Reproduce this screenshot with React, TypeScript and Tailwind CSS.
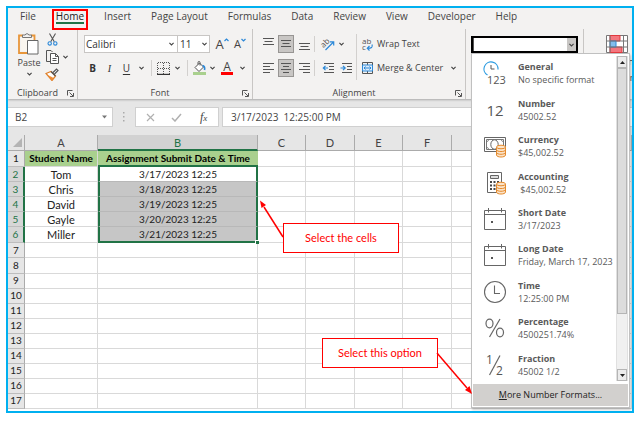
import type { ReactNode } from "react";

const tabs = ["File", "Home", "Insert", "Page Layout", "Formulas", "Data", "Review", "View", "Developer", "Help"];

const columns = [
  { name: "A", width: "w-[73px]" },
  { name: "B", width: "w-[160px]" },
  { name: "C", width: "w-[48px]" },
  { name: "D", width: "w-[49px]" },
  { name: "E", width: "w-[48px]" },
  { name: "F", width: "w-[49px]" },
  { name: "G", width: "w-[48px]" },
  { name: "H", width: "w-[49px]" },
  { name: "I", width: "w-[48px]" },
  { name: "J", width: "" },
];

const students = [
  ["Tom", "3/17/2023 12:25"],
  ["Chris", "3/18/2023 12:25"],
  ["David", "3/19/2023 12:25"],
  ["Gayle", "3/20/2023 12:25"],
  ["Miller", "3/21/2023 12:25"],
];

function Chevron({ className = "w-3" }: { className?: string }) {
  return (
    <span className={`flex shrink-0 justify-center ${className}`}>
      <svg width="5" height="4" viewBox="0 0 5 4" fill="none" stroke="#444" strokeWidth="1.1">
        <path d="M.4.8 2.5 2.9 4.6.8" />
      </svg>
    </span>
  );
}

function Lines({ rows, height = 12 }: { rows: [number, number, number][]; height?: number }) {
  return (
    <svg width="12" height={height} viewBox={`0 0 12 ${height}`} stroke="#555" strokeWidth="1">
      {rows.map(([a, b, y]) => (
        <path key={y} d={`M${a} ${y}H${b}`} />
      ))}
    </svg>
  );
}

function Tool({ label, className, children }: { label: string; className: string; children: ReactNode }) {
  return (
    <button aria-label={label} className={`flex shrink-0 items-center justify-center ${className}`}>
      {children}
    </button>
  );
}

function Group({ name, launcher = true, className, children }: { name: string; launcher?: boolean; className: string; children?: ReactNode }) {
  return (
    <section className={`flex shrink-0 flex-col pt-[3px] ${className}`}>
      <div className="h-[55px]">{children}</div>
      <div className="flex h-3 items-center">
        <h2 className="flex-1 text-center text-[9px] leading-3 text-[#444]">{name}</h2>
        {launcher && (
          <button aria-label={`${name} settings`} className="mr-[3px]">
            <svg width="7" height="7" viewBox="0 0 7 7" fill="none" stroke="#555" strokeWidth="1">
              <path d="M.5 5.5v-5h5M2.5 2.5l3.5 3.5M6.5 3v3.5H3" />
            </svg>
          </button>
        )}
      </div>
    </section>
  );
}

function Divider({ className }: { className: string }) {
  return <span className={`w-px shrink-0 bg-[#d2d0ce] ${className}`} />;
}

function ClipboardGroup() {
  return (
    <Group name="Clipboard" className="w-[70px] border-r border-[#c8c6c4]">
      <div className="flex">
        <button className="ml-1.5 flex w-[30px] flex-col items-center text-[9px] leading-3 text-[#444]">
          <svg width="24" height="25" viewBox="0 0 24 25" fill="none">
            <path d="M6 3.500H2V21h8.500M17.500 8V3.500H14" stroke="#e8963a" strokeWidth="1.800" />
            <path d="M4 5h12v4h-5v10H4z" fill="#faf6ef" />
            <path d="M5.500 5.500V3h2.700a1.900 1.900 0 0 1 3.600 0h2.700v2.500z" fill="#f3f2f1" stroke="#777" />
            <path d="M10.500 8.500h10.500v13.500H10.500z" fill="#fff" stroke="#666" />
          </svg>
          <span>Paste</span>
          <Chevron className="mt-[3px] w-3" />
        </button>
        <div className="ml-px flex flex-col items-start">
          <Tool label="Cut" className="h-[15px] w-[14px]">
            <svg width="11" height="13" viewBox="0 0 11 13" fill="none">
              <path d="M2.500.5 7.300 8.700M8.500.5 3.700 8.700" stroke="#555" strokeWidth="1.100" />
              <circle cx="2.700" cy="10.400" r="1.700" stroke="#2b88d8" strokeWidth="1.100" />
              <circle cx="8.300" cy="10.400" r="1.700" stroke="#2b88d8" strokeWidth="1.100" />
            </svg>
          </Tool>
          <span className="mt-0.5 flex items-center">
            <Tool label="Copy" className="h-[15px] w-[14px]">
              <svg width="13" height="14" viewBox="0 0 13 14" fill="none" stroke="#555">
                <path d="M4.500 11.500h-4V.5h4.500l1.500 1.500" />
                <path d="M4.500 3.500h5L12.500 6.500v7h-8zM9.500 3.500v3h3M6.500 8.500h4M6.500 10.500h4" fill="#fff" />
              </svg>
            </Tool>
            <Chevron />
          </span>
          <Tool label="Format Painter" className="mt-0.5 h-4 w-[14px]">
            <svg width="14" height="13" viewBox="0 0 14 13" fill="none">
              <path d="M1 5.500 6 3.500l4.500 4.500L7 12.500z" fill="#fff" stroke="#e0812b" strokeWidth="1.300" />
              <path d="M3 7 8.500 10 7 12.500z" fill="#f08c32" />
              <path d="M6 3.500 10.500 8M8 4.500l3.500-3.500 1.500 1.500-3.500 3.500" stroke="#555" strokeWidth="1.200" fill="#fff" />
            </svg>
          </Tool>
        </div>
      </div>
    </Group>
  );
}

function FontGroup() {
  return (
    <Group name="Font" className="w-[175px] border-r border-[#c8c6c4]">
      <div className="flex h-[22px] items-center pt-0.5 pl-1.5">
        <label className="flex h-[18px] w-[94px] items-center border border-[#c8c6c4] bg-white">
          <select aria-label="Font name" className="min-w-0 flex-1 appearance-none bg-transparent pl-px text-[10px] text-[#333]">
            <option>Calibri</option>
          </select>
          <Chevron />
        </label>
        <label className="-ml-px flex h-[18px] w-[33px] items-center border border-[#c8c6c4] bg-white">
          <select aria-label="Font size" className="min-w-0 flex-1 appearance-none bg-transparent pl-0.5 text-[10px] text-[#333]">
            <option>11</option>
          </select>
          <Chevron className="w-2.5" />
        </label>
        <Tool label="Increase font size" className="ml-[3px] h-[18px] w-[18px]">
          <span className="text-[13px] leading-4 text-[#444]">A</span>
          <svg className="mb-2" width="5" height="4" viewBox="0 0 5 4" fill="none" stroke="#2b88d8" strokeWidth="1.200">
            <path d="M.5 3 2.500 1l2 2" />
          </svg>
        </Tool>
        <Tool label="Decrease font size" className="h-[18px] w-[18px]">
          <span className="text-[11px] leading-4 text-[#444]">A</span>
          <svg className="mb-2" width="5" height="4" viewBox="0 0 5 4" fill="none" stroke="#2b88d8" strokeWidth="1.200">
            <path d="M.5 1l2 2 2-2" />
          </svg>
        </Tool>
      </div>
      <div className="mt-1 flex h-5 items-center pl-1.5 text-[10px] text-[#333]">
        <button className="w-[17px] font-bold">B</button>
        <button className="w-[17px] font-['Liberation_Serif'] italic">I</button>
        <button className="w-[17px] underline underline-offset-2">U</button>
        <Chevron className="w-[13px]" />
        <Divider className="mx-[3px] h-4" />
        <Tool label="Borders" className="h-4 w-4">
          <svg width="13" height="13" viewBox="0 0 13 13" fill="none" stroke="#555">
            <path d="M.5 12V.5h12V12M6.500 1v11M1 6.500h11" strokeDasharray="1 1" />
            <path d="M0 12.500h13" strokeWidth="1.400" stroke="#333" />
          </svg>
        </Tool>
        <Chevron />
        <Divider className="mx-1 h-4" />
        <Tool label="Fill color" className="h-4 w-[14px]">
          <svg width="13" height="14" viewBox="0 0 13 14" fill="none">
            <path d="M2 6.500 6.500 2l4 4-4.500 4.500z" fill="#fff" stroke="#555" />
            <path d="M5 3.500V1.500a1 1 0 0 1 2 0v3" stroke="#555" />
            <path d="M9.500 4.500c2 .5 2.500 2 2 4.500" stroke="#2b88d8" strokeWidth="1.600" />
            <path d="M0 11h13v3H0z" fill="#a9d08e" />
          </svg>
        </Tool>
        <Chevron />
        <Tool label="Font color" className="h-4 w-[18px] flex-col">
          <span className="text-[12px] leading-[11px] text-[#444]">A</span>
          <span className="h-[3px] w-3 bg-[#ff0000]" />
        </Tool>
        <Chevron />
      </div>
    </Group>
  );
}

const on = "border border-[#979593] bg-[#c8c6c4]";

function AlignmentGroup() {
  return (
    <Group name="Alignment" className="w-[213px] border-r border-[#c8c6c4]">
      <div className="flex pt-0.5 pl-[7px]">
        <div>
          <div className="flex h-5 items-center gap-0.5">
            <Tool label="Top align" className="h-[18px] w-4 pb-1"><Lines rows={[[1, 12, 2.5], [2.5, 10.5, 5.5], [1, 12, 8.5]]} /></Tool>
            <Tool label="Middle align" className={`h-[18px] w-4 ${on}`}><Lines rows={[[1, 11, 2.5], [2.5, 9.5, 5.5], [1, 11, 8.5]]} /></Tool>
            <Tool label="Bottom align" className="h-[18px] w-4 pt-1"><Lines rows={[[1, 12, 3.5], [2.5, 10.5, 6.5], [1, 12, 9.5]]} /></Tool>
            <Divider className="mr-1 h-4" />
            <Tool label="Orientation" className="h-4 w-[14px]">
              <svg className="overflow-visible" width="14" height="14" viewBox="0 0 14 14" fill="none">
                <text x="0" y="9" transform="rotate(-45 4 7)" fontSize="8" fill="#555" fontFamily="Open Sans">ab</text>
                <path d="M4.500 13 12.500 5M9 4.800h3.700v3.700" stroke="#2b88d8" strokeWidth="1.200" />
              </svg>
            </Tool>
            <Chevron className="w-2" />
          </div>
          <div className="mt-1 flex h-5 items-center gap-0.5">
            <Tool label="Align left" className="h-[18px] w-4"><Lines rows={[[1, 12, 1.5], [1, 8, 4.5], [1, 12, 7.5], [1, 8, 10.5]]} /></Tool>
            <Tool label="Center" className={`h-[18px] w-4 ${on}`}><Lines rows={[[1, 11, 1.5], [3, 9, 4.5], [1, 11, 7.5], [3, 9, 10.5]]} /></Tool>
            <Tool label="Align right" className="h-[18px] w-4"><Lines rows={[[1, 12, 1.5], [5, 12, 4.5], [1, 12, 7.5], [5, 12, 10.5]]} /></Tool>
            <Divider className="mr-1 h-4" />
            <Tool label="Decrease indent" className="h-4 w-[14px]">
              <svg width="13" height="12" viewBox="0 0 13 12" fill="none" stroke="#555">
                <path d="M2 1.500h10M7 4.500h5M7 7.500h5M2 10.500h10" />
                <path d="M6 6H1.500M3.500 3.800 1.300 6l2.200 2.200" stroke="#2b88d8" strokeWidth="1.200" />
              </svg>
            </Tool>
            <Tool label="Increase indent" className="ml-0.5 h-4 w-[14px]">
              <svg width="13" height="12" viewBox="0 0 13 12" fill="none" stroke="#555">
                <path d="M2 1.500h10M7 4.500h5M7 7.500h5M2 10.500h10" />
                <path d="M.5 6H5M3 3.800 5.200 6 3 8.200" stroke="#2b88d8" strokeWidth="1.200" />
              </svg>
            </Tool>
          </div>
        </div>
        <Divider className="mr-[5px] ml-[3px] h-[46px]" />
        <div className="text-[9px] text-[#444]">
          <button className="flex h-5 items-center gap-1">
            <svg className="overflow-visible" width="11" height="13" viewBox="0 0 11 13" fill="none">
              <text x="0" y="6" fontSize="8" fill="#555" fontFamily="Open Sans">ab</text>
              <text x="0" y="12" fontSize="8" fill="#555" fontFamily="Open Sans">c</text>
              <path d="M10 6.500c1 3-.5 3.800-4.500 3.800M7.500 8 5.300 10.300l2.200 2.200" stroke="#2b88d8" strokeWidth="1.200" />
            </svg>
            Wrap Text
          </button>
          <button className="mt-1 flex h-5 items-center gap-1 whitespace-nowrap">
            <svg width="11" height="12" viewBox="0 0 11 12" fill="none">
              <path d="M.5.5h10v11H.5zM5.500.5v2.500M5.500 9v2.500" stroke="#555" />
              <path d="M.5 3h10v6H.5z" fill="#deecf9" stroke="#2b88d8" />
              <path d="M2 6h7M3.500 4.500 2 6l1.500 1.500M7.500 4.500 9 6 7.500 7.500" stroke="#2b88d8" />
            </svg>
            Merge &amp; Center
            <Chevron />
          </button>
        </div>
      </div>
    </Group>
  );
}

function NumberAndStyles() {
  return (
    <>
      <Group name="Number" className="w-[118px] border-r border-[#c8c6c4]">
        <div className="mt-1 ml-[5px] flex h-[17px] w-[107px] border-2 border-black bg-white">
          <input aria-label="Number format" className="min-w-0 flex-1 border-l border-[#555] outline-none" />
          <button aria-label="Open number formats" className="flex w-[9px] items-center bg-[#c8c6c4]">
            <Chevron className="w-[9px]" />
          </button>
        </div>
      </Group>
      <Group name="Styles" launcher={false} className="w-[66px]">
        <button className="flex w-full flex-col items-center pt-[3px] text-[9px] leading-4 text-[#444]">
          <svg width="22" height="18" viewBox="0 0 22 18" fill="none">
            <path d="M.5.500h21v17H.5z" fill="#fff" stroke="#777" />
            <path d="M4 .5h10v5.500H4zM4 12h12v5.500H4z" fill="#f4777f" stroke="#e03a3e" />
            <path d="M4 6h6v6H4z" fill="#83beec" stroke="#2b88d8" />
            <path d="M.5 6h21M.5 12h21M4 .5v17M17.500.5v17" stroke="#777" />
          </svg>
          <span className="mt-px whitespace-nowrap">Conditional</span>
          <span>Formatting</span>
        </button>
      </Group>
    </>
  );
}

function FormulaBar() {
  return (
    <div className="flex h-[20px] shrink-0 text-[10px] text-[#444]">
      <label className="flex w-[105px] items-center border border-l-0 border-[#d0d0d0] bg-white">
        <input aria-label="Name box" defaultValue="B2" className="min-w-0 flex-1 pl-[7px] outline-none" />
        <svg className="mr-[5px]" width="5" height="4" viewBox="0 0 5 4"><path d="M0 .5h5L2.500 3.500z" fill="#777" /></svg>
      </label>
      <svg className="mx-[10px] self-center" width="2" height="10" viewBox="0 0 2 10" fill="#aaa">
        <path d="M0 0h1.500v1.500H0zM0 4h1.500v1.500H0zM0 8h1.500v1.500H0z" />
      </svg>
      <div className="flex w-[84px] items-center justify-around border border-[#d0d0d0] bg-white px-px">
        <Tool label="Cancel" className="w-6">
          <svg width="9" height="9" viewBox="0 0 9 9" stroke="#b0b0b0" strokeWidth="1.200"><path d="M1 1l7 7M8 1 1 8" /></svg>
        </Tool>
        <Tool label="Enter" className="w-6">
          <svg width="11" height="9" viewBox="0 0 11 9" fill="none" stroke="#b0b0b0" strokeWidth="1.500"><path d="M1 5l3 3L10 1" /></svg>
        </Tool>
        <button className="w-6 font-['Liberation_Serif'] text-[12px] italic">f<span className="text-[9px]">x</span></button>
      </div>
      <input aria-label="Formula" defaultValue="3/17/2023  12:25:00 PM" className="ml-[3px] min-w-0 flex-1 border border-r-0 border-[#d0d0d0] bg-white pl-2 outline-none" />
    </div>
  );
}

function SheetRow({ n }: { n: number }) {
  const student = students[n - 2];
  const title = n === 1;
  const cell = "overflow-hidden border-r border-b border-[#d9d9d9] p-0 text-center whitespace-nowrap";
  return (
    <tr>
      <th
        scope="row"
        className={`border-b border-b-[#bdbdbd] p-0 text-center text-[10px] font-normal ${
          student ? "border-r-2 border-r-[#217346] bg-[#d6d6d6] text-[#217346]" : "border-r border-r-[#ababab] bg-[#e6e6e6] text-[#222]"
        }`}
      >
        {n}
      </th>
      <td className={`${cell} ${title ? "bg-[#a9d08e] text-[10px] font-bold text-black" : ""}`}>{title ? "Student Name" : student?.[0]}</td>
      <td
        className={
          title
            ? "border-b-2 border-[#217346] bg-[#a9d08e] p-0 text-center text-[10px] font-bold whitespace-nowrap text-black"
            : student
              ? `relative border-x-2 border-x-[#217346] p-0 text-center text-[10px] ${n === 2 ? "" : "bg-[#c6c6c6]"} ${
                  n === 6 ? "border-b-2 border-b-[#217346]" : "border-b border-b-[#b8b8b8]"
                }`
              : cell
        }
      >
        {title ? "Assignment Submit Date & Time" : student?.[1]}
        {n === 6 && <span className="absolute -right-[3px] -bottom-[3px] size-1 border-t border-l border-white bg-[#217346]" />}
      </td>
      {columns.slice(2).map((c) => (
        <td key={c.name} className={cell} />
      ))}
    </tr>
  );
}

function Sheet() {
  return (
    <div className="min-h-0 flex-1 bg-white pb-[2px]">
      <table className="h-full w-full table-fixed border-separate border-spacing-0 font-['Lato','Open_Sans',sans-serif] text-[11px] leading-[13px] text-[#222]">
        <thead>
          <tr className="h-4 bg-[#e6e6e6]">
            <th className="w-[17px] border-r border-b border-[#ababab] p-0">
              <svg className="ml-auto mr-0.5" width="9" height="9" viewBox="0 0 9 9"><path d="M9 0v9H0z" fill="#b4b4b4" /></svg>
            </th>
            {columns.map((c) => (
              <th
                key={c.name}
                scope="col"
                className={`p-0 font-normal ${c.width} ${
                  c.name === "B" ? "border-r border-b-2 border-r-[#ababab] border-b-[#217346] bg-[#d2d2d2] text-[#217346]" : "border-r border-b border-[#ababab] text-[#444]"
                }`}
              >
                {c.name}
              </th>
            ))}
          </tr>
        </thead>
        <tbody>
          {Array.from({ length: 17 }, (_, i) => (
            <SheetRow key={i} n={i + 1} />
          ))}
        </tbody>
      </table>
    </div>
  );
}

function Coins() {
  return (
    <g fill="#fbe3c8" stroke="#e58a2c">
      <path d="M13.500 13v8c0 2.700 9 2.700 9 0v-8" />
      <ellipse cx="18" cy="13" rx="4.500" ry="1.800" />
      <path d="M13.500 15.700c0 2.500 9 2.500 9 0M13.500 18.400c0 2.500 9 2.500 9 0" fill="none" />
    </g>
  );
}

function Calendar() {
  return (
    <svg width="24" height="24" viewBox="0 0 24 24" fill="none" stroke="#666">
      <path d="M1.500 3.500h21v19h-21zM1.500 7.500h21M5.500 1v4.500M18.500 1v4.500" />
      <path d="M8 14h2v2H8z" fill="#555" stroke="none" />
    </svg>
  );
}

const formats: { name: string; sample: string; icon: ReactNode }[] = [
  {
    name: "General",
    sample: "No specific format",
    icon: (
      <svg width="24" height="26" viewBox="0 0 24 26" fill="none">
        <path d="M4.500 15A7 7 0 1 1 15 9.500" stroke="#2b9be0" strokeWidth="1.200" />
        <path d="M8 5v4h3.500" stroke="#555" />
        <text x="4" y="24" fontSize="11" fill="#555" fontFamily="Open Sans">123</text>
      </svg>
    ),
  },
  { name: "Number", sample: "45002.52", icon: <span className="text-[15px] leading-6 text-[#555]">12</span> },
  {
    name: "Currency",
    sample: "$45,002.52",
    icon: (
      <svg width="24" height="24" viewBox="0 0 24 24" fill="none">
        <path d="M1.500 3.500h21v14h-21z" stroke="#666" />
        <path d="M3.500 7.500c1.500 0 2-.5 2-2M18.500 5.500c0 1.500.5 2 2 2M3.500 13.500c1.500 0 2 .5 2 2M3.500 5.500h17v10h-17z" stroke="#777" />
        <ellipse cx="11.500" cy="10.500" rx="3.700" ry="4.700" fill="#fff" stroke="#666" />
        <Coins />
      </svg>
    ),
  },
  {
    name: "Accounting",
    sample: " $45,002.52",
    icon: (
      <svg width="24" height="24" viewBox="0 0 24 24" fill="none">
        <path d="M4.500 1.500h14v20h-14z" fill="#fff" stroke="#666" />
        <path d="M7.500 4.500h8v3h-8z" fill="#ddd" stroke="#666" />
        <path d="M7 10h2v2H7zM10.500 10h2v2h-2zM14 10h2v2h-2zM7 13.500h2v2H7zM10.500 13.500h2v2h-2zM7 17h2v2H7zM10.500 17h2v2h-2z" fill="#444" />
        <Coins />
      </svg>
    ),
  },
  { name: "Short Date", sample: "3/17/2023", icon: <Calendar /> },
  { name: "Long Date", sample: "Friday, March 17, 2023", icon: <Calendar /> },
  {
    name: "Time",
    sample: "12:25:00 PM",
    icon: (
      <svg width="24" height="24" viewBox="0 0 24 24" fill="none" stroke="#666" strokeWidth="1.100">
        <circle cx="12" cy="12" r="10.500" />
        <path d="M11.500 5.500v8H17" />
      </svg>
    ),
  },
  {
    name: "Percentage",
    sample: "4500251.74%",
    icon: (
      <svg width="24" height="24" viewBox="0 0 24 24" fill="none" stroke="#666" strokeWidth="1.200">
        <ellipse cx="6.500" cy="7.500" rx="3.500" ry="4.300" />
        <ellipse cx="17" cy="16.500" rx="3.500" ry="4.300" />
        <path d="M17 3 6.500 21" />
      </svg>
    ),
  },
  {
    name: "Fraction",
    sample: "45002 1/2",
    icon: (
      <svg width="24" height="24" viewBox="0 0 24 24" fill="none">
        <path d="M17 2.500 6.500 22" stroke="#666" strokeWidth="1.200" />
        <text x="3" y="11" fontSize="12" fill="#555" fontFamily="Open Sans">1</text>
        <text x="13" y="22" fontSize="12" fill="#555" fontFamily="Open Sans">2</text>
      </svg>
    ),
  },
];

function FormatMenu() {
  return (
    <div className="absolute top-[45px] right-0.5 flex h-[355px] w-[159px] flex-col border border-[#c0c0c0] bg-white shadow-[1px_2px_2px_#0003]">
      <div className="flex min-h-0 flex-1 pt-px">
        <ul className="flex min-w-0 flex-1 flex-col">
          {formats.map((f) => (
            <li key={f.name} className="flex flex-1">
              <button className="flex items-center gap-[11px] pl-[11px] text-left whitespace-pre text-[#5a5a5a]">
                <span className="flex w-6 shrink-0 justify-center">{f.icon}</span>
                <span className="flex flex-col text-[9px] leading-[13px]">
                  <span className="font-bold">{f.name}</span>
                  <span>{f.sample}</span>
                </span>
              </button>
            </li>
          ))}
        </ul>
        <div className="mt-px mr-px mb-[2px] flex w-3 flex-col border-x border-[#e0e0e0] bg-[#f0f0f0]">
          <button aria-label="Scroll up" className="flex h-3 items-center justify-center border border-[#b5b5b5] bg-[#ececec]">
            <svg width="5" height="3" viewBox="0 0 5 3"><path d="M0 3h5L2.500 0z" fill="#222" /></svg>
          </button>
          <span className="h-[246px] border border-[#b5b5b5] bg-[#dcdcdc]" />
          <button aria-label="Scroll down" className="mt-auto flex h-3 items-center justify-center border border-[#b5b5b5] bg-[#ececec]">
            <svg width="5" height="3" viewBox="0 0 5 3"><path d="M0 0h5L2.500 3z" fill="#222" /></svg>
          </button>
        </div>
      </div>
      <button className="m-px h-[22px] shrink-0 bg-[#d2d0ce] text-[9px] text-[#222]">
        <span className="underline">M</span>ore Number Formats...
      </button>
    </div>
  );
}

function Callout({ className, children }: { className: string; children: ReactNode }) {
  return (
    <p className={`absolute flex h-[30px] w-[116px] items-center justify-center border border-[#ff0000] bg-white font-['Lato','Open_Sans',sans-serif] text-[11px] text-[#ff0000] ${className}`}>
      {children}
    </p>
  );
}

export default function App() {
  return (
    <div className="h-screen bg-white pt-1.5 pr-[7px] pb-2 pl-1.5 font-['Open_Sans','Noto_Sans',sans-serif]">
      <main className="relative flex h-full flex-col overflow-hidden border-2 border-[#00b0f0] bg-[#e6e6e6]">
        <div className="shrink-0 bg-[#f3f2f1] shadow-[0_1px_2px_#0004]">
          <nav className="flex h-[21px] gap-5 pl-3 text-[10px] leading-4 text-[#444]">
            {tabs.map((tab) =>
              tab === "Home" ? (
                <button key={tab} className="relative h-4 border-b-2 border-[#217346] whitespace-nowrap text-[#222]">
                  {tab}
                  <span className="absolute -inset-x-1 top-[1px] h-[21px] border-2 border-[#ff0000]" />
                </button>
              ) : (
                <button key={tab} className="h-4 whitespace-nowrap">{tab}</button>
              ),
            )}
          </nav>
          <div className="flex h-[70px] overflow-hidden">
            <ClipboardGroup />
            <FontGroup />
            <AlignmentGroup />
            <NumberAndStyles />
          </div>
        </div>
        <div className="shrink-0 pt-2 pb-2">
          <FormulaBar />
        </div>
        <Sheet />
        <FormatMenu />
        <Callout className="top-[215px] left-[275px]">Select the cells</Callout>
        <Callout className="top-[330px] left-[314px]">Select this option</Callout>
        <svg className="pointer-events-none absolute top-0 left-0 h-full w-full" stroke="#f00" fill="#f00">
          <path d="M275 229 256 199" strokeWidth="1.500" />
          <path d="M252 192.500l1.500 7.500 4.500-3z" stroke="none" />
          <path d="M429 345 459 380" strokeWidth="1.500" />
          <path d="M464 386l-7-4 4.500-4z" stroke="none" />
        </svg>
      </main>
    </div>
  );
}
